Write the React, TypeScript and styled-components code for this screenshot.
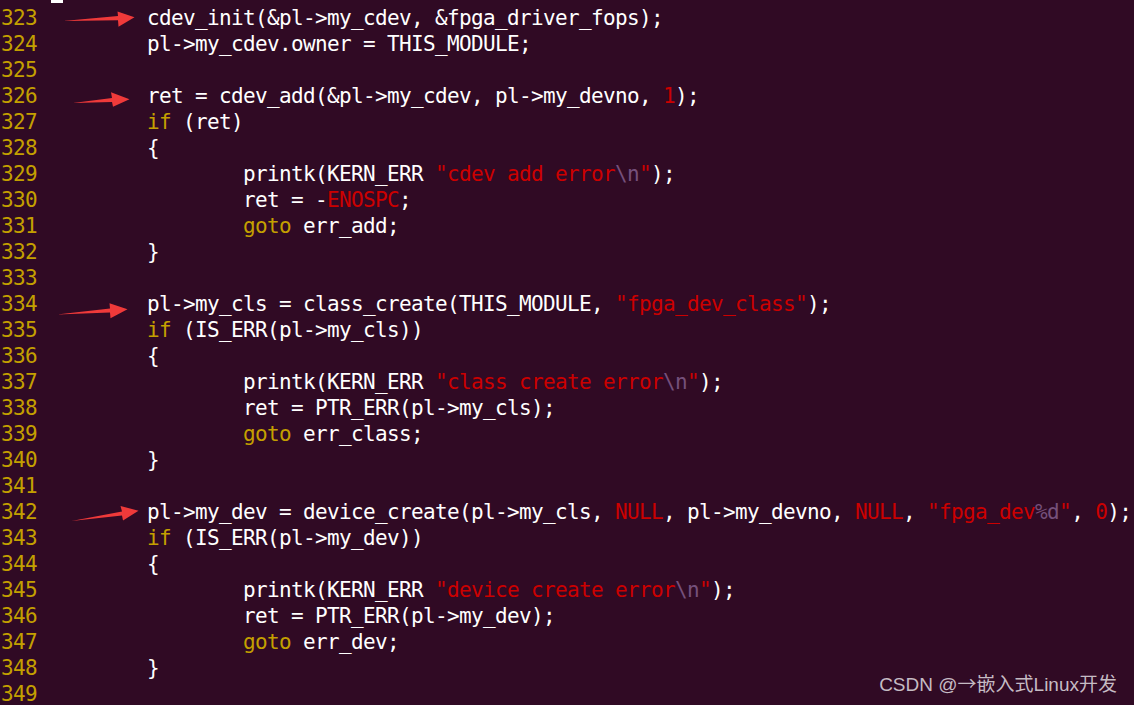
import React from "react";
import styled, { createGlobalStyle } from "styled-components";

const Global = createGlobalStyle`
  html, body {
    margin: 0;
    padding: 0;
    background: #300a24;
  }
`;

type Kind = "n" | "k" | "s" | "c" | "e";
type Seg = [string, Kind];

const T = "        ";
const TT = T + T;

const lines: { no: number; segs: Seg[] }[] = [
  { no: 323, segs: [[T + "cdev_init(&pl->my_cdev, &fpga_driver_fops);", "n"]] },
  { no: 324, segs: [[T + "pl->my_cdev.owner = THIS_MODULE;", "n"]] },
  { no: 325, segs: [] },
  { no: 326, segs: [[T + "ret = cdev_add(&pl->my_cdev, pl->my_devno, ", "n"], ["1", "c"], [");", "n"]] },
  { no: 327, segs: [[T, "n"], ["if", "k"], [" (ret)", "n"]] },
  { no: 328, segs: [[T + "{", "n"]] },
  { no: 329, segs: [[TT + "printk(KERN_ERR ", "n"], ["\"cdev add error", "s"], ["\\n", "e"], ["\"", "s"], [");", "n"]] },
  { no: 330, segs: [[TT + "ret = -", "n"], ["ENOSPC", "c"], [";", "n"]] },
  { no: 331, segs: [[TT, "n"], ["goto", "k"], [" err_add;", "n"]] },
  { no: 332, segs: [[T + "}", "n"]] },
  { no: 333, segs: [] },
  { no: 334, segs: [[T + "pl->my_cls = class_create(THIS_MODULE, ", "n"], ["\"fpga_dev_class\"", "s"], [");", "n"]] },
  { no: 335, segs: [[T, "n"], ["if", "k"], [" (IS_ERR(pl->my_cls))", "n"]] },
  { no: 336, segs: [[T + "{", "n"]] },
  { no: 337, segs: [[TT + "printk(KERN_ERR ", "n"], ["\"class create error", "s"], ["\\n", "e"], ["\"", "s"], [");", "n"]] },
  { no: 338, segs: [[TT + "ret = PTR_ERR(pl->my_cls);", "n"]] },
  { no: 339, segs: [[TT, "n"], ["goto", "k"], [" err_class;", "n"]] },
  { no: 340, segs: [[T + "}", "n"]] },
  { no: 341, segs: [] },
  {
    no: 342,
    segs: [
      [T + "pl->my_dev = device_create(pl->my_cls, ", "n"],
      ["NULL", "c"],
      [", pl->my_devno, ", "n"],
      ["NULL", "c"],
      [", ", "n"],
      ["\"fpga_dev", "s"],
      ["%d", "e"],
      ["\"", "s"],
      [", ", "n"],
      ["0", "c"],
      [");", "n"],
    ],
  },
  { no: 343, segs: [[T, "n"], ["if", "k"], [" (IS_ERR(pl->my_dev))", "n"]] },
  { no: 344, segs: [[T + "{", "n"]] },
  { no: 345, segs: [[TT + "printk(KERN_ERR ", "n"], ["\"device create error", "s"], ["\\n", "e"], ["\"", "s"], [");", "n"]] },
  { no: 346, segs: [[TT + "ret = PTR_ERR(pl->my_dev);", "n"]] },
  { no: 347, segs: [[TT, "n"], ["goto", "k"], [" err_dev;", "n"]] },
  { no: 348, segs: [[T + "}", "n"]] },
  { no: 349, segs: [] },
];

const colors: Record<Kind, string> = {
  n: "#ffffff",
  k: "#c4a000",
  s: "#cc0000",
  c: "#cc0000",
  e: "#75507b",
};

const Terminal = styled.div`
  position: relative;
  width: 1134px;
  height: 705px;
  overflow: hidden;
  background: #300a24;
  font-family: "DejaVu Sans Mono", "Liberation Mono", monospace;
  font-size: 21px;
  letter-spacing: -0.643px;
  line-height: 26px;
`;

const Cursor = styled.div`
  width: 12px;
  height: 3px;
  margin-left: 51px;
  margin-bottom: 2px;
  background: #ffffff;
`;

const Lines = styled.div`
  display: flex;
  flex-direction: column;
  padding-left: 1px;
`;

const Row = styled.div`
  display: flex;
  height: 26px;
  white-space: pre;
`;

const LineNo = styled.span`
  width: 50px;
  flex: none;
  color: #c4a000;
`;

const Code = styled.span`
  color: #ffffff;
`;

const Tok = styled.span<{ $kind: Kind }>`
  color: ${(p) => colors[p.$kind]};
`;

const Arrows = styled.svg`
  position: absolute;
  left: 0;
  top: 0;
  pointer-events: none;
`;

const Watermark = styled.div`
  position: absolute;
  right: 17px;
  bottom: 9px;
  font-family: "Liberation Sans", "Noto Sans CJK SC", sans-serif;
  font-size: 19px;
  letter-spacing: 0;
  line-height: 22px;
  color: rgba(225, 222, 225, 0.85);
`;

const WideArrow = styled.span`
  font-family: "Noto Sans CJK SC", sans-serif;
`;

const arrowPts = [
  "63,21 118,16 117.5,11.5 134.5,17.3 118.5,26.7 118,20.3",
  "73,103 112,98 111,92.3 129.5,99.3 113,106.7 112,102",
  "57,314.5 110,308.5 109.5,303.3 127.5,309.3 110.5,318.3 110,312.5",
  "71.5,521 122,511.5 120.5,506 138.5,510.7 123,520.5 122,515.5",
];

export default function App() {
  return (
    <Terminal>
      <Global />
      <Cursor />
      <Lines>
        {lines.map((l) => (
          <Row key={l.no}>
            <LineNo>{l.no}</LineNo>
            <Code>
              {l.segs.map(([text, kind], i) => (
                <Tok key={i} $kind={kind}>
                  {text}
                </Tok>
              ))}
            </Code>
          </Row>
        ))}
      </Lines>
      <Arrows width={1134} height={705} viewBox="0 0 1134 705">
        {arrowPts.map((p, i) => (
          <polygon key={i} points={p} fill="#ef3a3a" />
        ))}
      </Arrows>
      <Watermark>
        CSDN @<WideArrow>→</WideArrow>嵌入式Linux开发
      </Watermark>
    </Terminal>
  );
}
